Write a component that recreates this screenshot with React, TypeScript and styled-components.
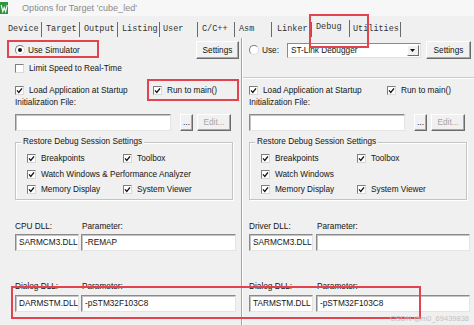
import React from "react";
import styled, { createGlobalStyle } from "styled-components";

const GlobalStyle = createGlobalStyle`
  html, body { margin: 0; padding: 0; background: #f0f0f0; }
  #root { width: 474px; height: 325px; }
  * { box-sizing: border-box; }
`;

const UI = `'Liberation Sans', Arial, sans-serif`;
const MONO = `'Liberation Mono', 'Courier New', monospace`;

const Window = styled.div`
  position: relative;
  width: 474px;
  height: 325px;
  overflow: hidden;
  background: #f0f0f0;
  font-family: ${UI};
  font-size: 8.25px;
  color: #151515;
  display: flex;
  flex-direction: column;
`;

const TitleBar = styled.div`
  height: 16px;
  flex: none;
  display: flex;
  align-items: center;
  background: #f7f7f7;
`;

const TitleText = styled.span`
  margin-left: 13px;
  font-size: 9.1px;
  color: #8a8a8a;
  white-space: nowrap;
`;

const TabRow = styled.div`
  height: 22px;
  flex: none;
  display: flex;
  align-items: flex-start;
  padding-top: 6px;
`;

const Tab = styled.div<{ $w: number; $pl: number; $active?: boolean }>`
  width: ${(p) => p.$w}px;
  padding-left: ${(p) => p.$pl}px;
  height: ${(p) => (p.$active ? 17 : 15)}px;
  margin-top: ${(p) => (p.$active ? -2 : 0)}px;
  line-height: 15px;
  border-right: 1px solid #6a6a6a;
  font-family: ${MONO};
  font-size: 8.5px;
  color: #333;
  white-space: nowrap;
`;

const Main = styled.div`
  flex: 1;
  display: flex;
  padding-left: 8px;
`;

const Panel = styled.div<{ $w: number; $pl: number; $pr: number }>`
  width: ${(p) => p.$w}px;
  padding-left: ${(p) => p.$pl}px;
  padding-right: ${(p) => p.$pr}px;
  display: flex;
  flex-direction: column;
`;

const Divider = styled.div`
  width: 2px;
  border-left: 1px solid #a4a4a4;
  border-right: 1px solid #ffffff;
`;

const TopSection = styled.div`
  height: 44px;
  margin-top: 2px;
  display: flex;
  flex-direction: column;
`;

const SimRow = styled.div`
  height: 20px;
  display: flex;
  align-items: center;
  justify-content: space-between;
`;

const UseRow = styled.div`
  height: 20px;
  display: flex;
  align-items: center;
`;

const UseLabel = styled.span`
  margin-left: 3px;
  white-space: nowrap;
`;

const LineRow = styled.div<{ $mt?: number }>`
  height: 12px;
  margin-top: ${(p) => p.$mt ?? 0}px;
  display: flex;
  align-items: center;
`;

const Separator = styled.div`
  margin: 17px -3px 0 -6px;
  border-top: 1px solid #c9c9c9;
  border-bottom: 1px solid #ffffff;
`;

const TwoCol = styled.div`
  height: 12px;
  display: grid;
  grid-template-columns: 138px auto;
  align-items: center;
`;

const Label = styled.div<{ $mt?: number }>`
  height: 12px;
  line-height: 12px;
  margin-top: ${(p) => p.$mt ?? 0}px;
  white-space: nowrap;
`;

const Option = styled.label<{ $gap: number }>`
  display: flex;
  align-items: center;
  gap: ${(p) => p.$gap}px;
  white-space: nowrap;
`;

const Box = styled.span`
  width: 9px;
  height: 9px;
  flex: none;
  background: #ffffff;
  border: 1px solid;
  border-color: #7e7e7e #d8d8d8 #d8d8d8 #7e7e7e;
  display: flex;
  align-items: center;
  justify-content: center;
`;

const RadioDot = styled.span<{ $on?: boolean }>`
  width: 10px;
  height: 10px;
  flex: none;
  border-radius: 50%;
  background: #ffffff;
  border: 1px solid;
  border-color: #7e7e7e #dcdcdc #dcdcdc #7e7e7e;
  display: flex;
  align-items: center;
  justify-content: center;
  &::after {
    content: "";
    width: 4px;
    height: 4px;
    border-radius: 50%;
    background: ${(p) => (p.$on ? "#111" : "transparent")};
  }
`;

const Button = styled.div<{ $w: number; $h?: number; $disabled?: boolean }>`
  width: ${(p) => p.$w}px;
  height: ${(p) => p.$h ?? 18}px;
  flex: none;
  background: #f1f1f1;
  border: 1px solid;
  border-color: #ffffff #6b6b6b #6b6b6b #ffffff;
  box-shadow: inset -1px -1px 0 #a8a8a8;
  display: flex;
  align-items: center;
  justify-content: center;
  color: ${(p) => (p.$disabled ? "#a6a6a6" : "#111")};
  white-space: nowrap;
`;

const TextBox = styled.div<{ $w?: number; $h?: number }>`
  width: ${(p) => (p.$w ? `${p.$w}px` : "auto")};
  height: ${(p) => p.$h ?? 17}px;
  flex: none;
  background: #ffffff;
  border: 1px solid;
  border-color: #8a8a8a #e4e4e4 #e4e4e4 #8a8a8a;
  box-shadow: inset 1px 1px 0 #c4c4c4;
  padding-left: 3px;
  line-height: 15px;
  white-space: nowrap;
  overflow: hidden;
`;

const FieldRow = styled.div`
  margin-top: 5px;
  height: 17px;
  display: flex;
`;

const Combo = styled.div`
  margin-left: 8px;
  width: 134px;
  height: 15px;
  background: #ffffff;
  border: 1px solid;
  border-color: #8a8a8a #e0e0e0 #e0e0e0 #8a8a8a;
  display: flex;
  align-items: center;
  justify-content: space-between;
  padding-left: 3px;
  padding-right: 1px;
  white-space: nowrap;
`;

const ComboArrow = styled.span`
  width: 12px;
  height: 11px;
  background: #f1f1f1;
  border: 1px solid;
  border-color: #ffffff #6b6b6b #6b6b6b #ffffff;
  display: flex;
  align-items: center;
  justify-content: center;
`;

const GroupBox = styled.div`
  position: relative;
  margin-top: 11px;
  width: 218px;
  height: 58px;
  border: 1px solid #c4c4c4;
  box-shadow: inset 1px 1px 0 #ffffff, 1px 1px 0 #ffffff;
  padding: 8px 0 0 11px;
  display: grid;
  grid-template-columns: 96px auto;
  grid-auto-rows: 15.5px;
  align-items: center;
`;

const Legend = styled.span`
  position: absolute;
  top: -7px;
  left: 5px;
  padding: 0 2px;
  line-height: 12px;
  background: #f0f0f0;
  white-space: nowrap;
`;

const Wide = styled.div`
  grid-column: 1 / 3;
`;

const DllGrid = styled.div<{ $mt: number; $gap: number; $w2: number }>`
  margin-top: ${(p) => p.$mt}px;
  display: grid;
  grid-template-columns: 64px ${(p) => p.$w2}px;
  column-gap: ${(p) => p.$gap}px;
  align-items: center;
`;

const DllLabel = styled.div<{ $pl?: number }>`
  height: 12px;
  line-height: 12px;
  padding-left: ${(p) => p.$pl ?? 0}px;
  white-space: nowrap;
`;

const Highlight = styled.div<{ $x: number; $y: number; $w: number; $h: number }>`
  position: absolute;
  left: ${(p) => p.$x}px;
  top: ${(p) => p.$y}px;
  width: ${(p) => p.$w}px;
  height: ${(p) => p.$h}px;
  border: 2px solid #e2434f;
  pointer-events: none;
`;

const Watermark = styled.div`
  position: absolute;
  right: 5px;
  bottom: 2px;
  font-size: 7.5px;
  color: #c2c2c2;
  white-space: nowrap;
`;

const Check = () => (
  <svg width="7" height="7" viewBox="0 0 7 7">
    <path d="M1 3.4 L2.8 5.4 L6 1.3" fill="none" stroke="#111" strokeWidth="1.3" />
  </svg>
);

const CheckItem = ({ label }: { label: string }) => (
  <Option $gap={5}>
    <Box>
      <Check />
    </Box>
    {label}
  </Option>
);

const KeilIcon = () => (
  <svg width="9" height="14" viewBox="0 0 9 14">
    <rect x="0" y="1" width="8" height="12" fill="#2f9440" />
    <path d="M1.2 4 L2.8 10.5 L4.2 6.5 L5.6 10.5 L7.2 4" fill="none" stroke="#ffffff" strokeWidth="1.1" />
  </svg>
);

const tabs: { label: string; w: number; pl: number; active?: boolean }[] = [
  { label: "Device", w: 42, pl: 8 },
  { label: "Target", w: 38, pl: 4 },
  { label: "Output", w: 38, pl: 4 },
  { label: "Listing", w: 42, pl: 4 },
  { label: "User", w: 38, pl: 3 },
  { label: "C/C++", w: 37, pl: 4 },
  { label: "Asm", w: 37, pl: 4 },
  { label: "Linker", w: 40, pl: 5 },
  { label: "Debug", w: 38, pl: 4, active: true },
  { label: "Utilities", w: 51, pl: 3 },
];

type SideProps = {
  top: React.ReactNode;
  watchLabel: string;
  dllLabel: string;
  dllValue: string;
  dllParam: string;
  dialogValue: string;
  gap: number;
  w2: number;
};

const DebugSide = ({ top, watchLabel, dllLabel, dllValue, dllParam, dialogValue, gap, w2 }: SideProps) => (
  <>
    {top}
    <TwoCol>
      <CheckItem label="Load Application at Startup" />
      <CheckItem label="Run to main()" />
    </TwoCol>
    <Label $mt={1}>Initialization File:</Label>
    <FieldRow>
      <TextBox $w={156} />
      <Button $w={13} $h={17} style={{ marginLeft: 9 }}>
        ...
      </Button>
      <Button $w={34} $h={17} $disabled style={{ marginLeft: 4 }}>
        Edit...
      </Button>
    </FieldRow>
    <GroupBox>
      <Legend>Restore Debug Session Settings</Legend>
      <CheckItem label="Breakpoints" />
      <CheckItem label="Toolbox" />
      <Wide>
        <CheckItem label={watchLabel} />
      </Wide>
      <CheckItem label="Memory Display" />
      <CheckItem label="System Viewer" />
    </GroupBox>
    <DllGrid $mt={21} $gap={gap} $w2={w2}>
      <DllLabel>{dllLabel}</DllLabel>
      <DllLabel $pl={1}>Parameter:</DllLabel>
    </DllGrid>
    <DllGrid $mt={1} $gap={gap} $w2={w2}>
      <TextBox $w={64}>{dllValue}</TextBox>
      <TextBox $w={w2}>{dllParam}</TextBox>
    </DllGrid>
    <DllGrid $mt={30} $gap={gap} $w2={w2}>
      <DllLabel>Dialog DLL:</DllLabel>
      <DllLabel $pl={1}>Parameter:</DllLabel>
    </DllGrid>
    <DllGrid $mt={2} $gap={gap} $w2={w2}>
      <TextBox $w={64}>{dialogValue}</TextBox>
      <TextBox $w={w2}>-pSTM32F103C8</TextBox>
    </DllGrid>
  </>
);

export default function App() {
  return (
    <>
      <GlobalStyle />
      <Window>
        <TitleBar>
          <KeilIcon />
          <TitleText>Options for Target 'cube_led'</TitleText>
        </TitleBar>
        <TabRow>
          {tabs.map((t) => (
            <Tab key={t.label} $w={t.w} $pl={t.pl} $active={t.active}>
              {t.label}
            </Tab>
          ))}
        </TabRow>
        <Main>
          <Panel $w={233} $pl={7} $pr={2}>
            <DebugSide
              top={
                <TopSection>
                  <SimRow>
                    <Option $gap={3}>
                      <RadioDot $on />
                      Use Simulator
                    </Option>
                    <Button $w={43}>Settings</Button>
                  </SimRow>
                  <LineRow $mt={2}>
                    <Option $gap={5}>
                      <Box />
                      Limit Speed to Real-Time
                    </Option>
                  </LineRow>
                </TopSection>
              }
              watchLabel="Watch Windows & Performance Analyzer"
              dllLabel="CPU DLL:"
              dllValue="SARMCM3.DLL"
              dllParam="-REMAP"
              dialogValue="DARMSTM.DLL"
              gap={2}
              w2={155}
            />
          </Panel>
          <Divider />
          <Panel $w={231} $pl={6} $pr={3}>
            <DebugSide
              top={
                <TopSection>
                  <UseRow>
                    <RadioDot />
                    <UseLabel>Use:</UseLabel>
                    <Combo>
                      ST-Link Debugger
                      <ComboArrow>
                        <svg width="5" height="3" viewBox="0 0 5 3">
                          <path d="M0 0 H5 L2.5 3 Z" fill="#111" />
                        </svg>
                      </ComboArrow>
                    </Combo>
                    <Button $w={45} style={{ marginLeft: "auto" }}>
                      Settings
                    </Button>
                  </UseRow>
                  <Separator />
                </TopSection>
              }
              watchLabel="Watch Windows"
              dllLabel="Driver DLL:"
              dllValue="SARMCM3.DLL"
              dllParam=""
              dialogValue="TARMSTM.DLL"
              gap={3}
              w2={154}
            />
          </Panel>
        </Main>
        <Highlight $x={309} $y={14} $w={60} $h={34} />
        <Highlight $x={7} $y={40} $w={92} $h={18} />
        <Highlight $x={147} $y={79} $w={92} $h={22} />
        <Highlight $x={11} $y={286} $w={410} $h={33} />
        <Watermark>CSDN @m0_69439838</Watermark>
      </Window>
    </>
  );
}
